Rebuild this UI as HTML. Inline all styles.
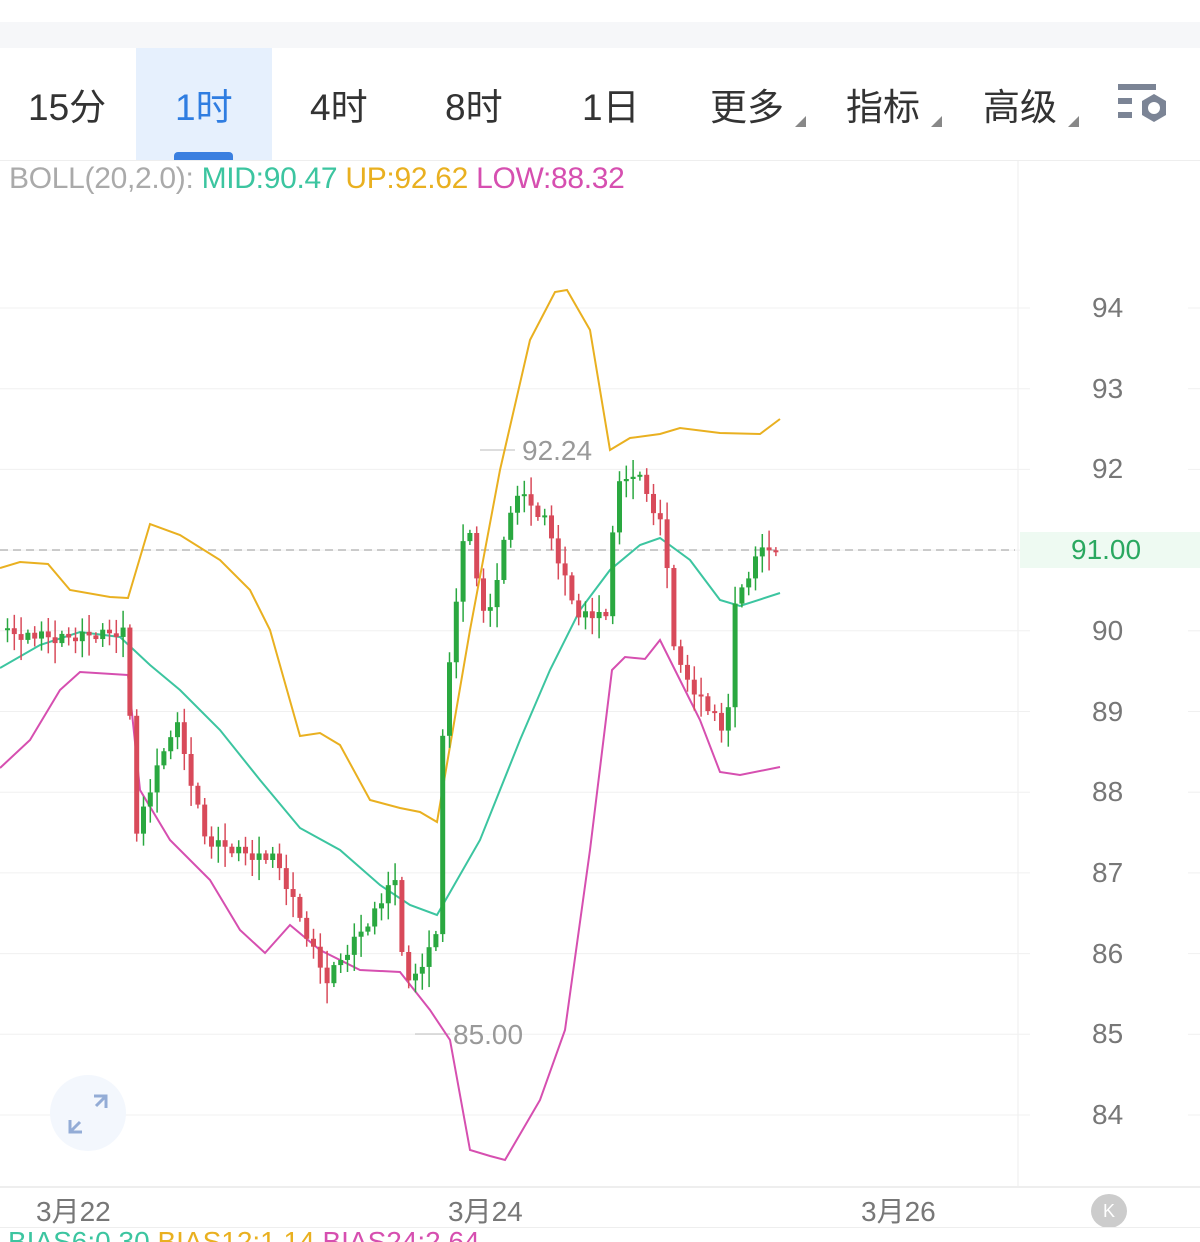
<!DOCTYPE html>
<html><head><meta charset="utf-8">
<style>
body{margin:0;width:1200px;height:1242px;overflow:hidden;background:#fff;font-family:"Liberation Sans","Noto Sans CJK SC",sans-serif;position:relative}
.top{position:absolute;left:0;top:22px;width:1200px;height:26px;background:#f6f7f9}
.tabs{position:absolute;top:48px;left:0;width:1200px;height:112px;border-bottom:1px solid #eee}
.tab{position:absolute;top:29px;font-size:37px;color:#333}
.sel{position:absolute;left:136px;top:0;width:136px;height:112px;background:#e6f0fd}
.bar{position:absolute;left:174px;top:104px;width:59px;height:8px;background:#3a7fe0;border-radius:4px 4px 0 0}
.tri{position:absolute;width:0;height:0;border-left:11px solid transparent;border-bottom:11px solid #888}
.leg{position:absolute;left:9px;top:162px;font-size:30px;color:#aaa;letter-spacing:-0.3px}
.ax{position:absolute;font-size:28px;color:#777}
</style></head><body>
<div class="top"></div>
<div class="tabs">
<div class="sel"></div><div class="bar"></div>
<div class="tab" style="left:28px">15分</div>
<div class="tab" style="left:175px;color:#2f7de1">1时</div>
<div class="tab" style="left:310px">4时</div>
<div class="tab" style="left:445px">8时</div>
<div class="tab" style="left:582px">1日</div>
<div class="tab" style="left:710px">更多</div><div class="tri" style="left:795px;top:68px"></div>
<div class="tab" style="left:846px">指标</div><div class="tri" style="left:931px;top:68px"></div>
<div class="tab" style="left:983px">高级</div><div class="tri" style="left:1068px;top:68px"></div>
<svg style="position:absolute;left:1116px;top:34px" width="56" height="48"><rect x="2" y="2" width="38" height="6" fill="#7b8495"/><rect x="2" y="16" width="14" height="6" fill="#7b8495"/><rect x="2" y="30" width="14" height="6" fill="#7b8495"/><polygon points="38,12 50,19 50,33 38,40 26,33 26,19" fill="#7b8495"/><circle cx="38" cy="26" r="6" fill="#fff"/></svg>
</div>
<div class="leg">BOLL(20,2.0): <span style="color:#3cc5a0">MID:90.47</span> <span style="color:#e9b020">UP:92.62</span> <span style="color:#d64fb0">LOW:88.32</span></div>
<svg id="c" style="position:absolute;left:0;top:0" width="1200" height="1242"></svg>
<div class="ax" style="left:1092px;top:292px">94</div>
<div class="ax" style="left:1092px;top:373px">93</div>
<div class="ax" style="left:1092px;top:453px">92</div>
<div style="position:absolute;left:1020px;top:532px;width:180px;height:36px;background:#eefaf2"></div>
<div class="ax" style="left:1071px;top:534px;color:#2aa860">91.00</div>
<div class="ax" style="left:1092px;top:615px">90</div>
<div class="ax" style="left:1092px;top:696px">89</div>
<div class="ax" style="left:1092px;top:776px">88</div>
<div class="ax" style="left:1092px;top:857px">87</div>
<div class="ax" style="left:1092px;top:938px">86</div>
<div class="ax" style="left:1092px;top:1018px">85</div>
<div class="ax" style="left:1092px;top:1099px">84</div>
<div class="ax" style="left:522px;top:435px;color:#999">92.24</div>
<div class="ax" style="left:453px;top:1019px;color:#999">85.00</div>
<div class="ax" style="left:36px;top:1190px">3月22</div>
<div class="ax" style="left:448px;top:1190px">3月24</div>
<div class="ax" style="left:861px;top:1190px">3月26</div>
<div style="position:absolute;left:1091px;top:1194px;width:36px;height:34px;border-radius:50%;background:#ccc;color:#fff;font-size:18px;text-align:center;line-height:34px">K</div>
<div style="position:absolute;left:50px;top:1075px;width:76px;height:76px;border-radius:50%;background:#f3f7fd"></div>
<svg style="position:absolute;left:66px;top:1092px" width="44" height="44"><path d="M28 4h12v12M40 4L30 14M16 40H4V28M4 40l10-10" stroke="#93acd6" stroke-width="3" fill="none"/></svg>
<div style="position:absolute;left:0;top:1186px;width:1200px;height:2px;background:#eee"></div>
<div style="position:absolute;left:0;top:1227px;width:1200px;height:1px;background:#eee"></div>
<div style="position:absolute;left:8px;top:1228px;font-size:28px;height:14px;overflow:hidden;line-height:28px;color:#3cc5a0">BIAS6:0.30 <span style="color:#e9b020">BIAS12:1.14</span> <span style="color:#d64fb0">BIAS24:2.64</span></div>
<script>
var s=document.getElementById('c'),h='';
h+='<line x1="1018" y1="160" x2="1018" y2="1186" stroke="#eee"/>';
for(var i=0;i<11;i++){var y=308+i*80.7;h+='<line x1="0" y1="'+y+'" x2="1030" y2="'+y+'" stroke="#f0f0f0"/><line x1="1188" y1="'+y+'" x2="1200" y2="'+y+'" stroke="#f0f0f0"/>';}
h+='<line x1="0" y1="550" x2="1015" y2="550" stroke="#999" stroke-dasharray="8,5"/>';
h+='<line x1="480" y1="450" x2="515" y2="450" stroke="#bbb"/><line x1="415" y1="1034" x2="450" y2="1034" stroke="#bbb"/>';
h+='<polyline fill="none" stroke="#e9b020" stroke-width="2" points="0,568 20,562 48,564 70,590 110,597 128,598 150,524 180,535 220,560 250,590 270,630 300,736 320,733 340,745 370,800 400,808 420,812 437,822 470,630 500,470 530,340 555,292 567,290 590,330 610,450 630,438 660,434 680,428 720,433 760,434 780,419"/>';
h+='<polyline fill="none" stroke="#3cc5a0" stroke-width="2" points="0,668 40,645 80,632 120,637 150,665 180,690 220,730 260,780 300,828 340,850 380,885 410,905 437,915 480,840 520,740 550,670 580,610 610,570 640,545 660,538 690,560 720,600 740,606 780,593"/>';
h+='<polyline fill="none" stroke="#d64fb0" stroke-width="2" points="0,768 30,740 60,690 80,672 128,675 140,790 170,840 210,880 240,930 265,953 290,925 320,950 360,970 400,972 430,1010 450,1040 470,1150 490,1156 505,1160 540,1100 565,1030 590,850 612,670 625,657 645,659 660,640 680,680 700,720 720,772 740,775 780,767"/>';
var pts=[[5,630],[60,640],[130,630],[140,830],[180,720],[210,840],[280,860],[330,980],[400,880],[410,990],[440,940],[446,740],[470,510],[490,630],[520,490],[550,520],[580,610],[610,620],[620,490],[640,470],[668,530],[680,660],[720,720],[730,740],[740,600],[770,540],[780,555]];
function py(x){for(var k=0;k<pts.length-1;k++){if(x<=pts[k+1][0]){var a=pts[k],b=pts[k+1];return a[1]+(b[1]-a[1])*(x-a[0])/(b[0]-a[0]);}}return 555;}
var prev=py(5);
for(var x=5;x<=780;x+=6.8){var c=py(x+6.8)+((x*37)%13-6),o=prev;var col=c<o?'#2aa840':'#d84a5a';var t=Math.min(o,c),b=Math.max(o,c);if(b-t<2)b=t+2;var w=(x*53)%17;h+='<line x1="'+(x+2.5)+'" y1="'+(t-w)+'" x2="'+(x+2.5)+'" y2="'+(b+w*1.2)+'" stroke="'+col+'" stroke-width="1.5"/><rect x="'+x+'" y="'+t+'" width="5" height="'+(b-t)+'" fill="'+col+'"/>';prev=c;}
s.innerHTML=h;
</script>
</body></html>
